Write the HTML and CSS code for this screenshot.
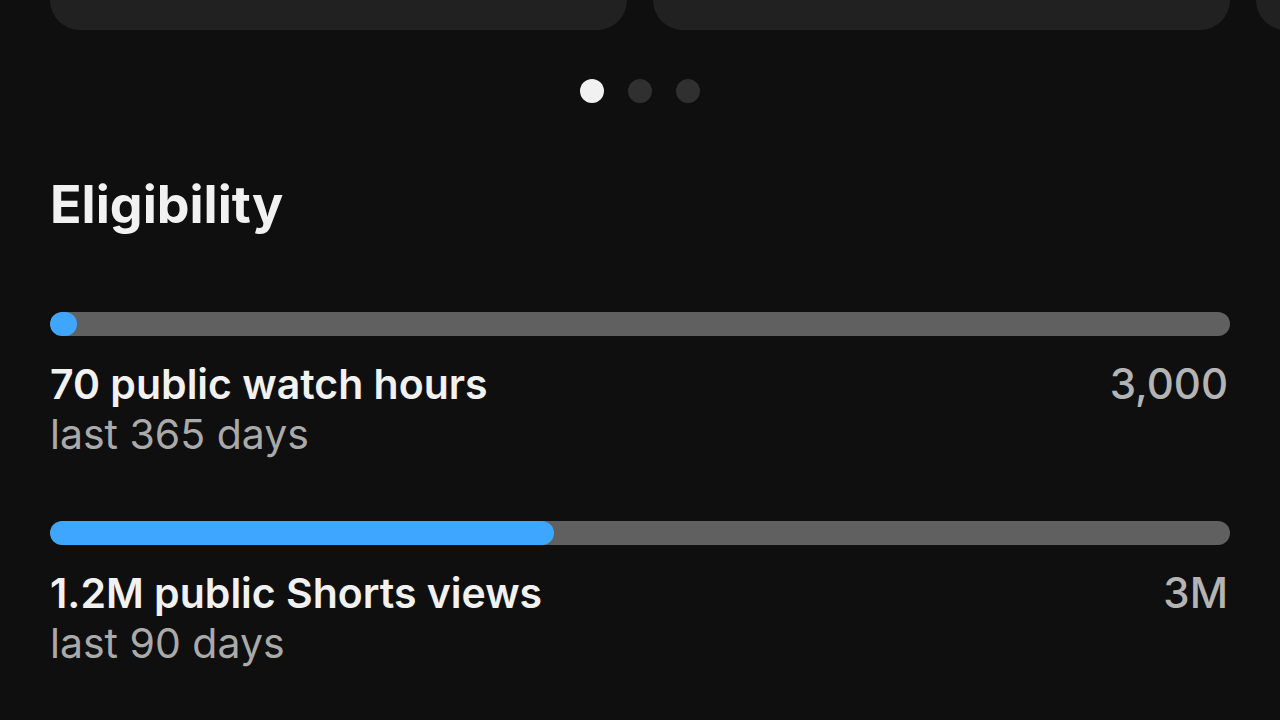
FILE: index.html
```html
<!DOCTYPE html>
<html lang="en">
<head>
  <meta charset="UTF-8">
  <meta name="viewport" content="width=device-width, initial-scale=1.0">
  <title>Eligibility</title>
  <link rel="stylesheet" href="styles.css">
</head>
<body>

  <!-- Carousel cards (cut off at the top) -->
  <div class="cards">
    <div class="card"></div>
    <div class="card"></div>
    <div class="card"></div>
  </div>

  <!-- Page dots -->
  <div class="dots">
    <span class="dot active"></span>
    <span class="dot"></span>
    <span class="dot"></span>
  </div>

  <section class="eligibility">
    <h1 class="heading">Eligibility</h1>

    <div class="metric">
      <div class="track"><div class="fill" style="width: 2.3%"></div></div>
      <div class="metric-row">
        <div>
          <div class="metric-title">70 public watch hours</div>
          <div class="metric-sub">last 365 days</div>
        </div>
        <div class="metric-goal">3,000</div>
      </div>
    </div>

    <div class="metric">
      <div class="track"><div class="fill" style="width: 42.7%"></div></div>
      <div class="metric-row">
        <div>
          <div class="metric-title">1.2M public Shorts views</div>
          <div class="metric-sub">last 90 days</div>
        </div>
        <div class="metric-goal">3M</div>
      </div>
    </div>
  </section>

</body>
</html>
```

FILE: styles.css
```css
body {
  font-family: Inter, "Noto Sans", sans-serif;
  margin: 0;
  background-color: #0f0f0f;
  color: #f1f1f1;
  overflow: hidden;
}
.cards {
  display: flex;
  gap: 26px;
  padding-left: 50px;
  overflow: hidden;
}
.card {
  flex: none;
  width: 577px;
  height: 30px;
  background-color: #212121;
  border-radius: 0 0 30px 30px;
}
.dots {
  display: flex;
  justify-content: center;
  gap: 24px;
  margin-top: 49px;
}
.dot {
  width: 24px;
  height: 24px;
  border-radius: 50%;
  background-color: #303030;
}
.dot.active {
  background-color: #f1f1f1;
}
.eligibility {
  padding: 0 50px;
}
.heading {
  margin: 0;
  padding-top: 70px;
  font-size: 52px;
  font-weight: 700;
  line-height: 64px;
}
.metric {
  margin-top: 75px;
}
.metric + .metric {
  margin-top: 62px;
}
.track {
  height: 24px;
  border-radius: 12px;
  background-color: #606060;
  overflow: hidden;
}
.fill {
  height: 100%;
  min-width: 27px;
  border-radius: 12px;
  background-color: #3ea6ff;
}
.metric-row {
  display: flex;
  justify-content: space-between;
  align-items: flex-start;
  margin-top: 23px;
}
.metric-title {
  font-size: 41px;
  font-weight: 600;
  line-height: 50px;
}
.metric-sub {
  font-size: 41px;
  color: #aaaaaa;
  line-height: 50px;
}
.metric-goal {
  font-size: 42px;
  font-weight: 500;
  line-height: 50px;
  color: #b4b4b4;
  padding-right: 2px;
}
```
